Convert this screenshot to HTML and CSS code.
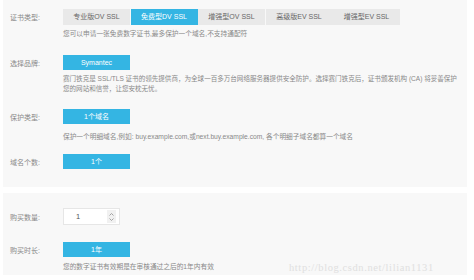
FILE: index.html
```html
<!DOCTYPE html>
<html lang="zh-CN">
<head>
    <meta charset="UTF-8">
    <title>SSL证书购买</title>
    <link rel="stylesheet" href="styles.css">
</head>
<body>
    <div class="page">
        <div class="panel panel-top">
            <div class="row">
                <div class="label">证书类型:</div>
                <div class="tabs">
                    <div class="tab">专业版OV SSL</div>
                    <div class="tab active">免费型DV SSL</div>
                    <div class="tab">增强型OV SSL</div>
                    <div class="tab">高级版EV SSL</div>
                    <div class="tab">增强型EV SSL</div>
                </div>
            </div>
            <p class="hint hint-tabs">您可以申请一张免费数字证书,最多保护一个域名,不支持通配符</p>

            <div class="row row-brand">
                <div class="label">选择品牌:</div>
                <div class="btn">Symantec</div>
            </div>
            <p class="desc">赛门铁克是 SSL/TLS 证书的领先提供商，为全球一百多万台网络服务器提供安全防护。选择赛门铁克后，证书颁发机构 (CA) 将妥善保护<br>您的网站和信誉，让您安枕无忧。</p>

            <div class="row row-protect">
                <div class="label">保护类型:</div>
                <div class="btn">1个域名</div>
            </div>
            <p class="hint hint-protect">保护一个明细域名,例如: buy.example.com,或next.buy.example.com, 各个明细子域名都算一个域名</p>

            <div class="row row-count">
                <div class="label">域名个数:</div>
                <div class="btn">1个</div>
            </div>
        </div>

        <div class="panel panel-bottom">
            <div class="row">
                <div class="label">购买数量:</div>
                <div class="number-box">
                    <span class="number-value">1</span>
                    <span class="spinner">
                        <svg width="7" height="10" viewBox="0 0 7 10">
                            <path d="M1.5 3.5 L3.5 1.5 L5.5 3.5" fill="none" stroke="#999" stroke-width="0.9"/>
                            <path d="M1.5 6.5 L3.5 8.5 L5.5 6.5" fill="none" stroke="#999" stroke-width="0.9"/>
                        </svg>
                    </span>
                </div>
            </div>

            <div class="row row-time">
                <div class="label">购买时长:</div>
                <div class="btn">1年</div>
            </div>
            <p class="hint hint-time">您的数字证书有效期是在审核通过之后的1年内有效</p>
        </div>

        <div class="watermark">http://blog.csdn.net/lilian1131</div>
    </div>
</body>
</html>
```

FILE: styles.css
```css
* {
    margin: 0;
    padding: 0;
    box-sizing: border-box;
}

body {
    font-family: 'Liberation Sans', 'Noto Sans CJK SC', sans-serif;
    background: #fff;
    color: #777;
}

.page {
    position: relative;
    width: 474px;
    height: 280px;
    padding: 0 7px 0 3px;
}

.panel {
    background: #f8f8f8;
    padding-left: 7px;
}

.panel-top {
    padding-top: 9px;
    padding-bottom: 18px;
}

.panel-bottom {
    margin-top: 6px;
    padding-top: 15px;
    padding-bottom: 3px;
}

.row {
    display: flex;
    align-items: center;
}

.label {
    width: 53px;
    font-size: 7px;
    color: #888;
}

.tabs {
    display: flex;
    gap: 0.5px;
}

.tab {
    width: 67px;
    height: 16px;
    line-height: 16px;
    text-align: center;
    font-size: 7px;
    color: #666;
    background: #e9e9e9;
}

.tab.active {
    background: #34b5e3;
    color: #fff;
}

.btn {
    width: 67px;
    height: 15px;
    line-height: 15px;
    text-align: center;
    font-size: 7px;
    color: #fff;
    background: #34b5e3;
}

.hint, .desc {
    margin-left: 53px;
    font-size: 6.7px;
    line-height: 10px;
    color: #888;
    white-space: nowrap;
}

.desc {
    font-size: 6.55px;
    margin-top: 4px;
}

.hint-tabs {
    margin-top: 4px;
}

.row-brand {
    margin-top: 16px;
}

.row-protect {
    margin-top: 15px;
}

.hint-protect {
    margin-top: 8px;
}

.row-count {
    margin-top: 12px;
}

.number-box {
    display: flex;
    align-items: center;
    justify-content: space-between;
    width: 57px;
    height: 17px;
    background: #fff;
    border: 1px solid #e6e6e6;
    padding: 0 3px 0 12px;
}

.number-value {
    font-size: 7.5px;
    color: #555;
}

.spinner {
    display: flex;
    align-items: center;
    justify-content: center;
    width: 9px;
    height: 13px;
    background: #f1f1f1;
}

.row-time {
    margin-top: 17px;
}

.hint-time {
    margin-top: 5px;
}

.watermark {
    position: absolute;
    left: 289px;
    top: 262px;
    font-family: 'Liberation Serif', serif;
    font-size: 10.5px;
    letter-spacing: 0.6px;
    color: #e0e0e0;
    white-space: nowrap;
}
```
